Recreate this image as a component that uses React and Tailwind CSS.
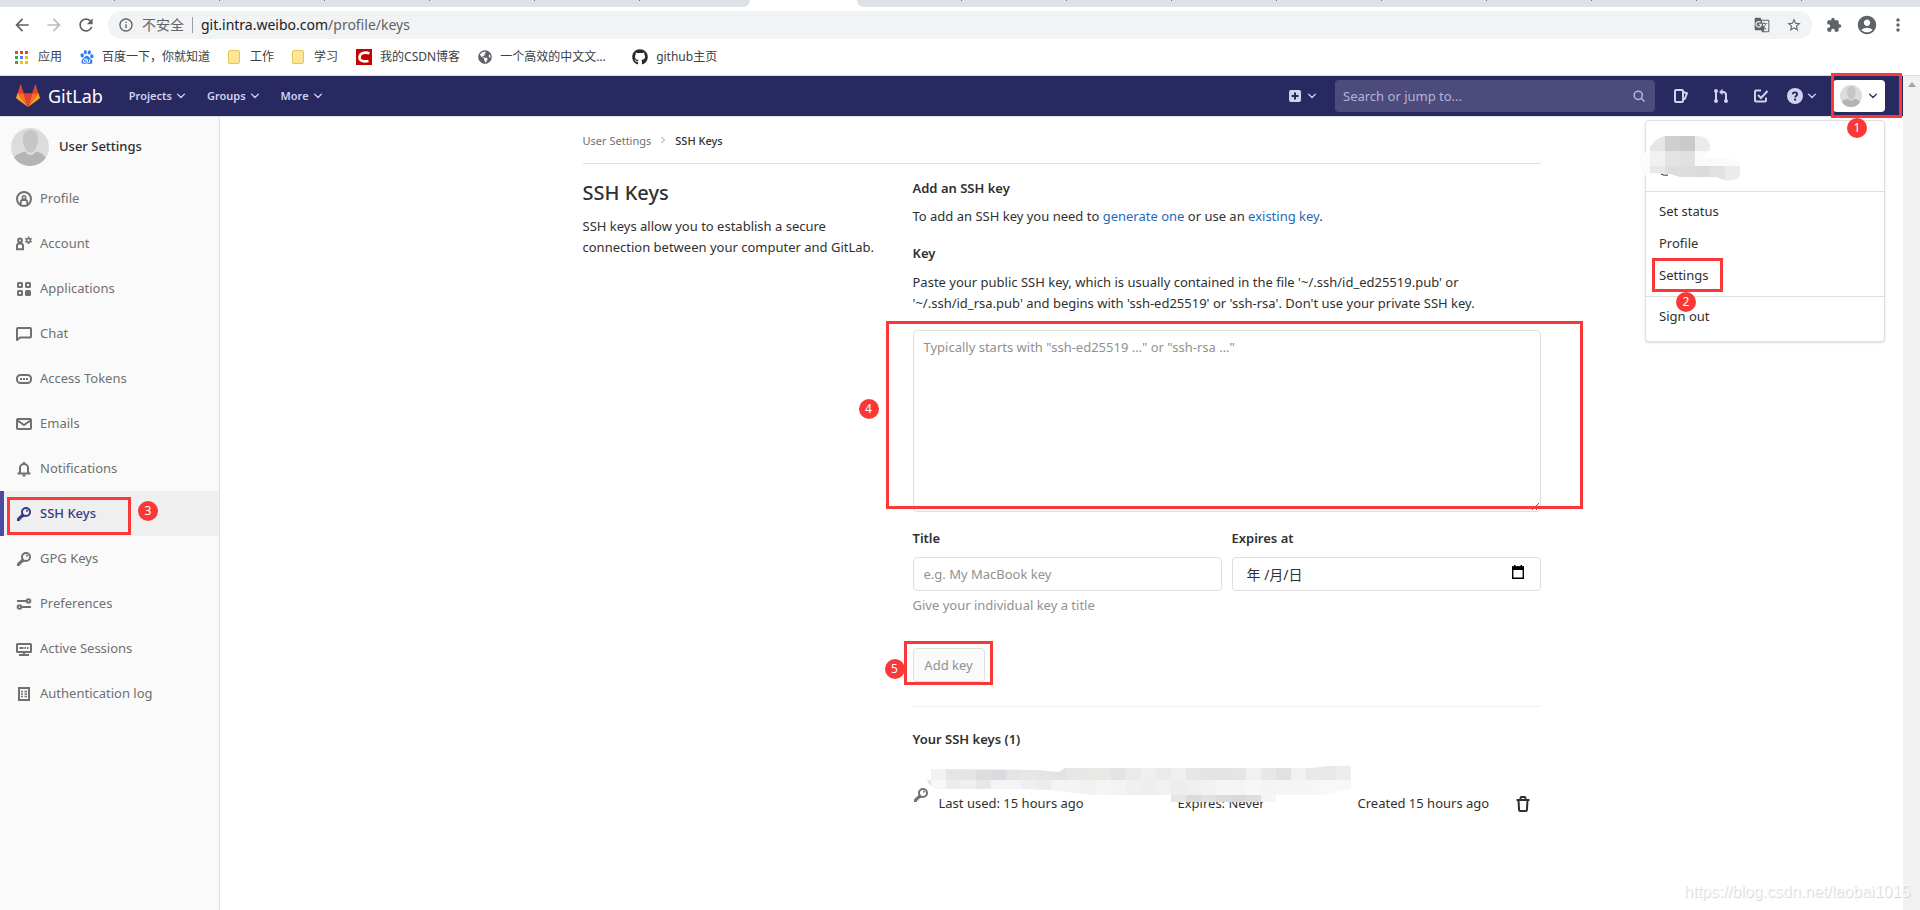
import React, { useState } from 'react';
import clsx from 'clsx';
import { FaGithub, FaGlobeAmericas } from 'react-icons/fa';
import { SiBaidu } from 'react-icons/si';
import { MdAccountCircle, MdArrowBack, MdArrowForward, MdExtension, MdGTranslate, MdInfoOutline, MdMoreVert, MdRefresh, MdStarBorder } from 'react-icons/md';

/* ---------- icons ---------- */

function Icon({ className = 'h-4 w-4', sw = 2, children }) {
  return (
    <svg viewBox="0 0 16 16" className={clsx('shrink-0', className)} fill="none" stroke="currentColor" strokeWidth={sw} aria-hidden="true">
      {children}
    </svg>
  );
}

const Chevron = ({ className = 'h-2.5 w-2.5' }) => (
  <Icon className={className} sw={2.2}><path d="M2.5 5L8 10.5 13.5 5" strokeLinecap="round" strokeLinejoin="round" /></Icon>
);

const KeyIcon = ({ className }) => (
  <Icon className={className}>
    <circle cx="10" cy="6" r="4" />
    <circle cx="11" cy="4.8" r="1" fill="currentColor" stroke="none" />
    <path d="M6.2 7.5L9 10.3l-2.6 1.5-1 .2v1.4H3.8V15H1v-2.6z" fill="currentColor" stroke="none" />
  </Icon>
);

const icons = {
  profile: (
    <Icon>
      <circle cx="8" cy="8" r="7" />
      <circle cx="8" cy="6.5" r="1.7" strokeWidth="1.6" />
      <path d="M4.8 13v-1.8c0-1.500 1-2.200 2-2.200h2.400c1 0 2 .7 2 2.200V13" strokeWidth="1.8" />
    </Icon>
  ),
  account: (
    <Icon>
      <circle cx="4" cy="4.3" r="1.9" />
      <path d="M1 13.2V10c0-1.6 1-2.6 2.2-2.6h1.6C6 7.4 7 8.4 7 10v3.2z" />
      <circle cx="12.5" cy="4.3" r="1.9" strokeWidth="1.5" />
      <path d="M12.5.6v1.800M12.5 6.200V8M9.300 2.450l1.600.9M14.100 5.250l1.600.9M9.300 6.150l1.600-.9M14.100 3.350l1.600-.9" strokeWidth="1.6" />
    </Icon>
  ),
  applications: (
    <Icon>
      <rect x="2" y="2" width="4" height="4" rx="0.5" />
      <rect x="10" y="2" width="4" height="4" rx="0.5" />
      <rect x="2" y="10" width="4" height="4" rx="0.5" />
      <rect x="10" y="10" width="4" height="4" rx="0.5" fill="currentColor" />
    </Icon>
  ),
  chat: <Icon><path d="M1 14V3a1 1 0 0 1 1-1h12a1 1 0 0 1 1 1v7.5a1 1 0 0 1-1 1H4z" strokeLinejoin="round" /></Icon>,
  token: (
    <Icon>
      <rect x="1" y="4" width="14" height="8" rx="3.5" />
      <path d="M4 8h2M7 8h2M10 8h2" />
    </Icon>
  ),
  mail: (
    <Icon>
      <rect x="1" y="3" width="14" height="10" rx="1" />
      <path d="M1.500 4.500L8 9l6.500-4.500" />
    </Icon>
  ),
  bell: (
    <Icon>
      <path d="M4 12V7a4 4 0 0 1 8 0v5" />
      <path d="M1.500 12.500h13" />
      <path d="M8 1v2M6.500 14.500h3" />
    </Icon>
  ),
  key: <KeyIcon />,
  preferences: (
    <Icon>
      <circle cx="12.5" cy="5" r="1.8" />
      <circle cx="3.5" cy="11" r="1.8" />
      <path d="M1 5h9.500M5.500 11H15" />
    </Icon>
  ),
  monitor: (
    <Icon>
      <rect x="1" y="3" width="14" height="8" rx="0.5" />
      <path d="M3.500 7h4M8.500 7h1.500M11 7h1.500M8 11v3M3 14h10" />
    </Icon>
  ),
  log: (
    <Icon>
      <rect x="3" y="2" width="10" height="12" />
      <path d="M5 5.500h2M8.500 5.500h2.500M5 8h2M8.500 8h2.500M5 10.500h2M8.500 10.500h2.500" strokeWidth="1.5" />
    </Icon>
  ),
  issues: (
    <Icon>
      <rect x="2" y="2" width="8" height="12" rx="1" />
      <path d="M10 4l4 1.200-2.200 5.800H10" strokeLinejoin="round" />
    </Icon>
  ),
  merge: (
    <Icon>
      <path d="M3 4v8M13 13V7c0-2-1-3-3-3H8.500" />
      <path d="M9.500.8v6.400L6 4z" fill="currentColor" stroke="none" />
      <circle cx="3" cy="3" r="1" /><circle cx="3" cy="13" r="1" /><circle cx="13" cy="13" r="1" />
    </Icon>
  ),
  todo: (
    <Icon>
      <path d="M8 2.500H3a1 1 0 0 0-1 1v9a1 1 0 0 0 1 1h9a1 1 0 0 0 1-1V9.500" />
      <path d="M5 7l3 3 6.500-7" />
    </Icon>
  ),
  trash: (
    <Icon>
      <path d="M1.500 4h13M5.500 3.500V2a1 1 0 0 1 1-1h3a1 1 0 0 1 1 1v1.500" />
      <path d="M3.500 4.500l.6 9.600a1 1 0 0 0 1 .9h5.800a1 1 0 0 0 1-.9l.6-9.600" />
    </Icon>
  ),
};

const Tanuki = () => (
  <svg viewBox="0 0 36 36" className="h-6 w-6" aria-hidden="true">
    <path fill="#e24329" d="M2 14l9.400 2H2zM7.300.6L11.800 14H2.600L6.600.7c.1-.4.6-.4.7-.1z" />
    <path fill="#e24329" d="M34 14l-9.400 2H34zM28.700.6L24.200 14h9.200L29.400.7c-.1-.4-.6-.4-.7-.1z" />
    <path fill="#fc6d26" d="M2.200 14h9.400L18 34.500z" />
    <path fill="#fc6d26" d="M33.800 14h-9.400L18 34.500z" />
    <path fill="#e24329" d="M18 34.500L24.600 14H11.400z" />
    <path fill="#fca326" d="M2.200 14L.2 20.300a1.300 1.300 0 0 0 .5 1.500L18 34.500zM33.800 14l2 6.300a1.300 1.300 0 0 1-.5 1.500L18 34.500z" />
  </svg>
);

const Avatar = ({ className }) => (
  <svg viewBox="0 0 38 38" className={clsx('shrink-0 rounded-full', className)} aria-hidden="true">
    <rect width="38" height="38" fill="#dcdcdc" />
    <path d="M19.500 2c5 0 7.500 3.500 7.500 8.500 0 6-2.500 14-7.500 14S12 16.500 12 10.500C12 5.500 14.500 2 19.500 2z" fill="#c6c6c6" />
    <path d="M3 30c2-4 7-5 11-6.500 1.500 2.500 3.500 3.500 5.500 3.500s4-1 5.500-3.500c4 1.500 8 2.500 10 6.500v8H3z" fill="#b4b4b4" />
  </svg>
);

/* ---------- red callouts ---------- */

const CalloutBox = ({ className }) => <span className={clsx('pointer-events-none absolute z-20 border-3 border-[#fb3838]', className)} />;

const CalloutNumber = ({ n, className }) => (
  <span className={clsx('absolute z-20 flex h-5 w-5 items-center justify-center rounded-full bg-[#fb3838] text-xs font-normal text-white', className)}>{n}</span>
);

/* ---------- data ---------- */

const bookmarks = [
  { label: '百度一下，你就知道', icon: 'baidu' },
  { label: '工作', icon: 'folder' },
  { label: '学习', icon: 'folder' },
  { label: '我的CSDN博客', icon: 'csdn' },
  { label: '一个高效的中文文...', icon: 'globe' },
  { label: 'github主页', icon: 'github' },
];

const appDots = ['#ea4335', '#ea4335', '#ea4335', '#34a853', '#4285f4', '#fbbc04', '#34a853', '#fbbc04', '#fbbc04'];

const sidebar = [
  { label: 'Profile', icon: 'profile' },
  { label: 'Account', icon: 'account' },
  { label: 'Applications', icon: 'applications' },
  { label: 'Chat', icon: 'chat' },
  { label: 'Access Tokens', icon: 'token' },
  { label: 'Emails', icon: 'mail' },
  { label: 'Notifications', icon: 'bell' },
  { label: 'SSH Keys', icon: 'key', active: true },
  { label: 'GPG Keys', icon: 'key' },
  { label: 'Preferences', icon: 'preferences' },
  { label: 'Active Sessions', icon: 'monitor' },
  { label: 'Authentication log', icon: 'log' },
];

const maskTop = ['#f3f2f0', '#e6e5e3', '#e4e4e4', '#dfdddb', '#dadbde', '#e4e4e4', '#e5e7e9', '#e4e5e7', '#e2e3e3', '#e6e7e7', '#e8e8e7', '#e8e8e5', '#e2e4e3', '#ebeaea', '#eeeff0', '#e9eaeb', '#efefef', '#e9e7e5', '#e3e4e5', '#e5e4e2', '#e5e5e5', '#f0f1f0', '#e6e8e5', '#e1e2df', '#f1f1ef', '#e8e9ed', '#eae8e7', '#ebedef'];
const maskMiddle = ['#f7f7f7', '#ececec', '#f0f0f0', '#e8e8e8', '#f4f4f4', '#f4f4f4', '#eeeff0', '#ebedec', '#f3f4f4', '#f4f4f4', '#f2f2f2', '#f5f5f5', '#f3f3f3', '#f0f0f0', '#eeeeee', '#f1f1f1', '#ededed', '#efefee', '#f2f2f2', '#f5f5f5', '#f5f5f5', '#f7f7f7', '#f3f4f4', '#f4f5f4', '#f4f5f4', '#f6f6f6', '#f8f8f8', '#f8f8f8'];
const maskBottom = ['#e6e6e6', '#dadbdd', '#e1e1e1', '#dcdcdd', '#d9d9db', '#dedede', '#f5f5f5'];

/* ---------- browser chrome ---------- */

function BookmarkIcon({ name }) {
  if (name === 'baidu') return <SiBaidu className="h-3.5 w-3.5 text-[#2d7cf6]" />;
  if (name === 'folder') return <span className="mr-0.5 h-3.5 w-3 rounded-xs border border-[#e8c64a] bg-[#ffe694]" />;
  if (name === 'csdn') {
    return (
      <svg viewBox="0 0 16 16" className="h-4 w-4" aria-hidden="true">
        <rect width="16" height="16" fill="#c80000" />
        <path d="M13.500 4.200C9 2.800 4 3.800 3.500 8c-.4 4 4 5 9 4" fill="none" stroke="#fff" strokeWidth="2.6" />
      </svg>
    );
  }
  if (name === 'globe') return <FaGlobeAmericas className="h-3.5 w-3.5 text-[#5f6368]" />;
  return <FaGithub className="h-4 w-4 text-[#24292e]" />;
}

function Tabs({ count, className }) {
  return (
    <div className={clsx('flex h-[7px] overflow-hidden bg-[#dee1e6]', className)}>
      {Array.from({ length: count }, (_, i) => (
        <span key={i} className="flex w-[105px] shrink-0 justify-end"><span className="h-px w-px bg-gray-500" /></span>
      ))}
    </div>
  );
}

function BrowserBar() {
  return (
    <div className="border-b border-[#dadce0] bg-white">
      <div className="flex">
        <Tabs count={6} className="w-[750px] rounded-br-lg pl-2.5" />
        <div className="w-[107px] shrink-0" />
        <Tabs count={9} className="flex-1 rounded-bl-lg" />
      </div>
      <div className="flex items-center py-1 pl-3 pr-3 text-[#5f6368]">
        <div className="flex w-24 gap-3">
          <button aria-label="Back"><MdArrowBack className="h-5 w-5" /></button>
          <button aria-label="Forward" className="text-[#babcbe]"><MdArrowForward className="h-5 w-5" /></button>
          <button aria-label="Reload"><MdRefresh className="h-5 w-5" /></button>
        </div>
        <div className="flex h-7 flex-1 items-center rounded-full bg-[#f1f3f4] pl-2.5 pr-2.5 text-sm">
          <MdInfoOutline className="h-4 w-4" />
          <span className="ml-2">不安全</span>
          <span className="mx-2 h-4 w-px bg-[#9aa0a6]" />
          <span className="flex-1"><span className="text-[#202124]">git.intra.weibo.com</span>/profile/keys</span>
          <MdGTranslate className="mr-4 h-4 w-4" />
          <MdStarBorder className="h-4 w-4" />
        </div>
        <MdExtension className="ml-3.5 h-4 w-4" />
        <MdAccountCircle className="ml-3.5 h-[22px] w-[22px]" />
        <MdMoreVert className="ml-2.5 h-5 w-5" />
      </div>
      <div className="mb-1 flex h-7 items-center gap-[18px] px-[15px] text-xs text-[#3c4043]">
        <a href="#apps" className="flex items-center gap-2.5">
          <span className="grid grid-cols-3 gap-0.5">
            {appDots.map((c, i) => <span key={i} className="h-[3px] w-[3px]" style={{ background: c }} />)}
          </span>
          应用
        </a>
        {bookmarks.map(b => (
          <a key={b.label} href="#bookmark" className={clsx('flex items-center gap-2', b.icon === 'globe' && 'w-[136px]')}>
            <BookmarkIcon name={b.icon} />
            {b.label}
          </a>
        ))}
      </div>
    </div>
  );
}

/* ---------- GitLab ---------- */

function UserMenu() {
  return (
    <div className="absolute right-0 top-10 z-10 w-60 rounded border border-[#dfdfdf] bg-white text-[13px] text-[#303030] shadow-sm">
      <div className="relative h-[71px] border-b border-[#dfdfdf]">
        <svg viewBox="0 0 100 50" className="absolute -left-1.5 top-3 h-[50px] w-[100px]" aria-hidden="true">
          <path d="M0 20h12v22H4Q0 38 0 30z" fill="#fcfcfc" />
          <clipPath id="userMask"><path d="M10 14Q18 3 26 3h32q12 0 12 12-2 10-16 10h30q16 2 16 8v10q-4 6-16 4l-8-3H40l-10-3-20-1z" /></clipPath>
          <g clipPath="url(#userMask)">
            <path fill="#e6e6e6" d="M10 3h15v15H10z" />
            <path fill="#cfcfcf" d="M25 3h15v15H25z" />
            <path fill="#cacaca" d="M40 3h15v15H40z" />
            <path fill="#ebebeb" d="M55 3h15v15H55z" />
            <path fill="#f1f1f1" d="M10 18h15v15H10z" />
            <path fill="#e3e3e3" d="M25 18h15v15H25z" />
            <path fill="#e0e0e0" d="M40 18h15v15H40z" />
            <path fill="#fafafa" d="M55 18h45v15H55z" />
            <path fill="#e8e8e8" d="M10 33h15v15H10z" />
            <path fill="#dddddd" d="M25 33h30v15H25z" />
            <path fill="#dadada" d="M55 33h15v15H55z" />
            <path fill="#e1e1e1" d="M70 33h15v15H70z" />
            <path fill="#ebebeb" d="M85 33h15v15H85z" />
          </g>
          <path d="M21 41q3 2 7 1" fill="none" stroke="#303030" />
        </svg>
      </div>
      <ul className="border-b border-[#dfdfdf] py-1">
        <li><button className="flex h-8 w-full items-center px-[13px]">Set status</button></li>
        <li><a href="#profile" className="flex h-8 items-center px-[13px]">Profile</a></li>
        <li className="relative">
          <a href="#settings" className="flex h-8 items-center px-[13px]">Settings</a>
          <CalloutBox className="-top-0.5 left-1.5 h-[34px] w-[71px]" />
          <CalloutNumber n={2} className="left-[30px] top-8" />
        </li>
      </ul>
      <div className="pb-2 pt-1">
        <a href="#sign-out" className="flex h-8 items-center px-[13px]">Sign out</a>
      </div>
    </div>
  );
}

function NavBar() {
  const [menuOpen, setMenuOpen] = useState(true);
  const [q, setQ] = useState('');

  return (
    <header className="flex h-10 items-center bg-[#292961] pl-4 pr-[18px] text-[#d1d1f0]">
      <a href="#home" className="mr-[26px] flex items-center gap-2 text-[18px] text-white"><Tanuki />GitLab</a>
      <nav className="flex gap-[21px] text-[11px] font-semibold">
        {['Projects', 'Groups', 'More'].map(item => (
          <button key={item} className="flex items-center gap-1">{item}<Chevron /></button>
        ))}
      </nav>

      <button aria-label="New" className="ml-auto mr-[18px] flex items-center gap-1.5">
        <svg viewBox="0 0 12 12" className="h-3 w-3" aria-hidden="true">
          <rect width="12" height="12" rx="2" fill="currentColor" />
          <path d="M6 2.500v7M2.500 6h7" stroke="#292961" strokeWidth="2" />
        </svg>
        <Chevron />
      </button>

      <div className="relative mr-1.5 w-80">
        <input
          aria-label="Search"
          placeholder="Search or jump to..."
          value={q}
          onChange={e => setQ(e.target.value)}
          className="h-8 w-full rounded bg-[#4c4b7c] pl-2 pr-8 text-[13px] text-white placeholder-[#b4b3d8] focus:outline-none"
        />
        <span className="absolute right-2.5 top-2.5 text-[#b4b3d8]">
          <Icon className="h-3 w-3"><circle cx="7" cy="7" r="5.5" /><path d="M11 11l4.500 4.500" /></Icon>
        </span>
      </div>

      <a href="#issues" aria-label="Issues" className="flex w-10 justify-center">{icons.issues}</a>
      <a href="#merge" aria-label="Merge requests" className="flex w-10 justify-center">{icons.merge}</a>
      <a href="#todos" aria-label="To-Do List" className="flex w-10 justify-center">{icons.todo}</a>
      <button aria-label="Help" className="mr-4 flex items-center gap-1 pl-1.5">
        <svg viewBox="0 0 16 16" className="h-4 w-4" aria-hidden="true">
          <circle cx="8" cy="8" r="8" fill="currentColor" />
          <path d="M5.800 6.300c0-1.300 1-2 2.200-2s2.200.7 2.200 1.900c0 1.500-2 1.500-2 3.200" fill="none" stroke="#292961" strokeWidth="1.8" />
          <circle cx="8.1" cy="11.7" r="1.1" fill="#292961" />
        </svg>
        <Chevron />
      </button>

      <div className="relative">
        <button
          aria-label="User menu"
          onClick={() => setMenuOpen(!menuOpen)}
          className="flex h-8 w-[52px] items-center justify-center gap-1.5 rounded bg-white text-[#292961]"
        >
          <Avatar className="h-[22px] w-[22px]" />
          <Chevron />
        </button>
        <CalloutBox className="-bottom-1.5 -left-0.5 -right-[17px] -top-[7px]" />
        <CalloutNumber n={1} className="left-3.5 top-[38px]" />
        {menuOpen && <UserMenu />}
      </div>
    </header>
  );
}

function SideBar() {
  return (
    <aside className="w-[220px] shrink-0 border-r border-[#dfdfdf] bg-[#fafafa]">
      <a href="#settings" className="flex h-[59px] items-center gap-2.5 pl-[11px] text-[13px] font-medium text-[#2e2e2e]">
        <Avatar className="h-[38px] w-[38px]" />
        User Settings
      </a>
      <ul>
        {sidebar.map(item => (
          <li key={item.label} className="relative">
            <a
              href="#section"
              className={clsx(
                'flex h-[45px] items-center gap-2 px-4 pt-px text-[13px]',
                item.active ? 'bg-[#efefef] font-medium text-[#393982] shadow-[inset_4px_0_0_#4b4ba3]' : 'text-[#707070]'
              )}
            >
              {icons[item.icon]}
              {item.label}
            </a>
            {item.active && (
              <>
                <CalloutBox className="left-[7px] top-1.5 h-[38px] w-[124px]" />
                <CalloutNumber n={3} className="left-[138px] top-2.5" />
              </>
            )}
          </li>
        ))}
      </ul>
    </aside>
  );
}

function KeyMask() {
  return (
    <svg viewBox="0 0 426 36" className="absolute -left-3.5 -top-[5px] h-9 w-[426px]" aria-hidden="true">
      <clipPath id="keyMask"><path d="M6 3l108 1 20 2 6-4h246l18-2h22v23l-29 6h-46v7H246v-7h-80l-43-5-30-1H10q-6-3-8-9h4z" /></clipPath>
      <g clipPath="url(#keyMask)">
        <rect x="0" y="14" width="6" height="9" fill="#e4e4e4" />
        {maskTop.map((c, i) => <rect key={i} x={6 + i * 15} y="0" width="15" height="14" fill={c} />)}
        {maskMiddle.map((c, i) => <rect key={i} x={6 + i * 15} y="14" width="15" height="15" fill={c} />)}
        {maskBottom.map((c, i) => <rect key={i} x={246 + i * 15} y="29" width="15" height="7" fill={c} />)}
      </g>
    </svg>
  );
}

const inputClass = 'w-full rounded border border-[#dfdfdf] bg-white px-2.5 text-[13px] text-[#303030] placeholder-[#919191] focus:outline-none';

function KeyForm() {
  const [key, setKey] = useState('');
  const [title, setTitle] = useState('');
  const [expires, setExpires] = useState('年 /月/日');

  return (
    <form className="mt-4" onSubmit={e => e.preventDefault()}>
      <label htmlFor="key" className="block font-semibold">Key</label>
      <p className="mt-2">
        Paste your public SSH key, which is usually contained in the file '~/.ssh/id_ed25519.pub' or '~/.ssh/id_rsa.pub' and begins with 'ssh-ed25519' or 'ssh-rsa'. Don't use your private SSH key.
      </p>
      <div className="relative mt-4">
        <textarea
          id="key"
          value={key}
          onChange={e => setKey(e.target.value)}
          placeholder={'Typically starts with "ssh-ed25519 …" or "ssh-rsa …"'}
          className={clsx(inputClass, 'block h-[182px] resize-y py-1.5')}
        />
        <CalloutBox className="-left-[27px] -right-[42px] -top-[9px] bottom-[3px]" />
        <CalloutNumber n={4} className="-left-[54px] top-[69px]" />
      </div>

      <div className="mt-4 grid grid-cols-2 gap-2.5">
        <div>
          <label htmlFor="title" className="block font-semibold">Title</label>
          <input id="title" value={title} onChange={e => setTitle(e.target.value)} placeholder="e.g. My MacBook key" className={clsx(inputClass, 'mt-2 block h-[34px]')} />
          <p className="mt-1 text-[#919191]">Give your individual key a title</p>
        </div>
        <div>
          <label htmlFor="expires" className="block font-semibold">Expires at</label>
          <div className="relative mt-2">
            <input id="expires" value={expires} onChange={e => setExpires(e.target.value)} className="block h-[34px] w-full rounded border border-[#dfdfdf] bg-white px-3.5 text-sm text-[#303030] focus:outline-none" />
            <svg viewBox="0 0 14 14" className="absolute right-4 top-2 h-3.5 w-3.5 text-black" aria-hidden="true">
              <path d="M1.700 2h10.600v11.300H1.700z" fill="none" stroke="currentColor" strokeWidth="1.4" />
              <path d="M1 1.500h12V5H1zM3 0h1.500v2H3zM9.500 0H11v2H9.500z" fill="currentColor" />
            </svg>
          </div>
        </div>
      </div>

      <div className="relative mt-8 w-[72px]">
        <button disabled className="h-[34px] w-full rounded border border-[#dfdfdf] bg-[#fafafa] text-[#919191]">Add key</button>
        <CalloutBox className="-bottom-[3px] -left-[9px] -right-2 -top-[7px]" />
        <CalloutNumber n={5} className="-left-7 top-[11px]" />
      </div>
    </form>
  );
}

function SshKeys() {
  return (
    <main className="flex-1">
      <div className="mx-auto max-w-[990px] px-4 text-[13px] leading-[21px] text-[#303030]">
        <div className="flex h-[47px] items-center gap-2 border-b border-[#dfdfdf] text-[11px]">
          <a href="#settings" className="text-[#707070]">User Settings</a>
          <Icon className="h-2 w-2 text-[#999999]"><path d="M5 2l6 6-6 6" /></Icon>
          <span className="font-medium">SSH Keys</span>
        </div>

        <div className="grid grid-cols-3 gap-8 pt-4">
          <div>
            <h4 className="text-xl font-medium leading-[26px]">SSH Keys</h4>
            <p className="mt-2.5">SSH keys allow you to establish a secure connection between your computer and GitLab.</p>
          </div>

          <div className="col-span-2">
            <h5 className="font-semibold leading-4">Add an SSH key</h5>
            <p className="mt-2.5">
              To add an SSH key you need to <a href="#generate" className="text-[#1f69b8]">generate one</a> or use an <a href="#existing" className="text-[#1f69b8]">existing key</a>.
            </p>
            <KeyForm />
            <hr className="mt-6 border-[#efefef]" />
            <h5 className="mt-6 font-semibold leading-4">Your SSH keys (1)</h5>

            <ul className="mt-6">
              <li className="flex">
                <KeyIcon className="mt-4 h-4 w-4 text-[#707070]" />
                <div className="relative ml-2.5 flex flex-1 pt-[22px]">
                  <span className="w-[239px]">Last used: 15 hours ago</span>
                  <span className="w-[180px]">Expires: Never</span>
                  <span className="flex-1">Created 15 hours ago</span>
                  <button aria-label="Remove" className="mr-2.5">{icons.trash}</button>
                  <KeyMask />
                </div>
              </li>
            </ul>
          </div>
        </div>
      </div>
    </main>
  );
}

export default function App() {
  return (
    <div className="relative flex min-h-screen flex-col bg-white font-['Noto_Sans','Noto_Sans_CJK_SC',sans-serif]">
      <BrowserBar />
      <div className="flex flex-1">
        <div className="flex flex-1 flex-col">
          <NavBar />
          <div className="flex flex-1 border-t border-[#dfdfdf]">
            <SideBar />
            <SshKeys />
          </div>
        </div>
        <div className="flex w-[17px] justify-center bg-[#f1f1f1] pt-1.5">
          <svg viewBox="0 0 8 5" className="h-[5px] w-2" aria-hidden="true"><path d="M0 5l4-5 4 5z" fill="#a3a3a3" /></svg>
        </div>
      </div>
      <div className="absolute bottom-2 right-2.5 z-30 font-['Liberation_Sans',sans-serif] text-base leading-5 text-white/80 [text-shadow:1px_1px_1px_#d0d0d0]">
        https://blog.csdn.net/laobai1015
      </div>
    </div>
  );
}
